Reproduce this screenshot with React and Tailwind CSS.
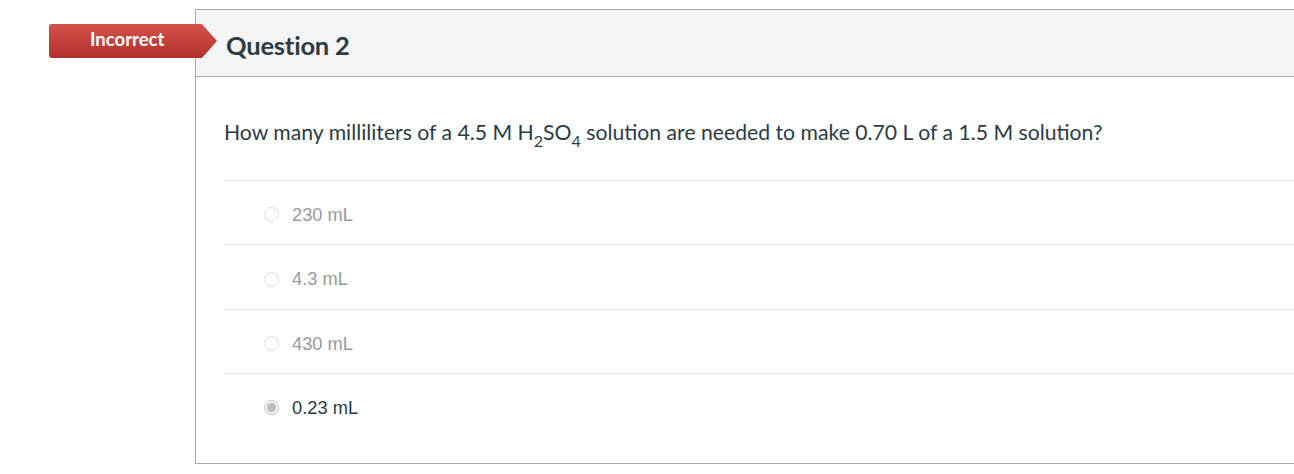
export default function App() {
  const answers = [
    { t: "230 mL", sel: false },
    { t: "4.3 mL", sel: false },
    { t: "430 mL", sel: false },
    { t: "0.23 mL", sel: true },
  ];
  return (
    <div className="relative w-[1294px] h-[474px] overflow-hidden bg-white" style={{ fontFamily: "Lato, 'Noto Sans', sans-serif" }}>
      <div className="ml-[195px] mt-[9px] w-[1200px] border border-[#a9a9a9]">
        <div className="h-[67px] bg-[#f5f5f5] border-b border-[#a9a9a9] flex items-center pl-[30px]">
          <h2 className="text-[25.5px] font-bold text-[#2d3b45] tracking-[-0.2px] pt-[5px]">Question 2</h2>
        </div>
        <div className="pl-[28px] pt-[40px] pb-[25px]">
          <p className="text-[21.2px] text-[#2d3b45] leading-[30px]">
            How many milliliters of a 4.5 M H<sub className="text-[16px] align-[-3px] leading-none">2</sub>SO<sub className="text-[16px] align-[-3px] leading-none">4</sub> solution are needed to make 0.70 L of a 1.5 M solution?
          </p>
          <div className="mt-[33px]">
            {answers.map((a, i) => (
              <div key={i} className="h-[64.4px] border-t border-[#e6e6e6] flex items-center pl-[40px] pt-[4px]">
                <span className={`w-[15px] h-[15px] rounded-full border flex items-center justify-center ${a.sel ? "border-[#c8c8c8] bg-[#f3f3f3]" : "border-[#dedede] bg-white"}`}>
                  {a.sel && <span className="w-[9px] h-[9px] rounded-full bg-[#bdbdbd]" />}
                </span>
                <span
                  className={`ml-[13px] text-[18.3px] ${a.sel ? "text-[#2d3b45]" : "text-[#9a9a9a]"}`}
                  style={{ fontFamily: "'Liberation Sans', Arial, sans-serif" }}
                >
                  {a.t}
                </span>
              </div>
            ))}
          </div>
        </div>
      </div>
      <div className="absolute left-[49px] top-[24px] w-[168px] h-[34px] [clip-path:polygon(0_0,91%_0,100%_50%,91%_100%,0_100%)]">
        <div className="w-full h-full rounded-l-[3px] bg-gradient-to-b from-[#d5524c] to-[#b2302b] flex items-center pl-[41px]">
          <span className="text-white font-bold text-[18.5px] pb-[2px]">Incorrect</span>
        </div>
      </div>
    </div>
  );
}
